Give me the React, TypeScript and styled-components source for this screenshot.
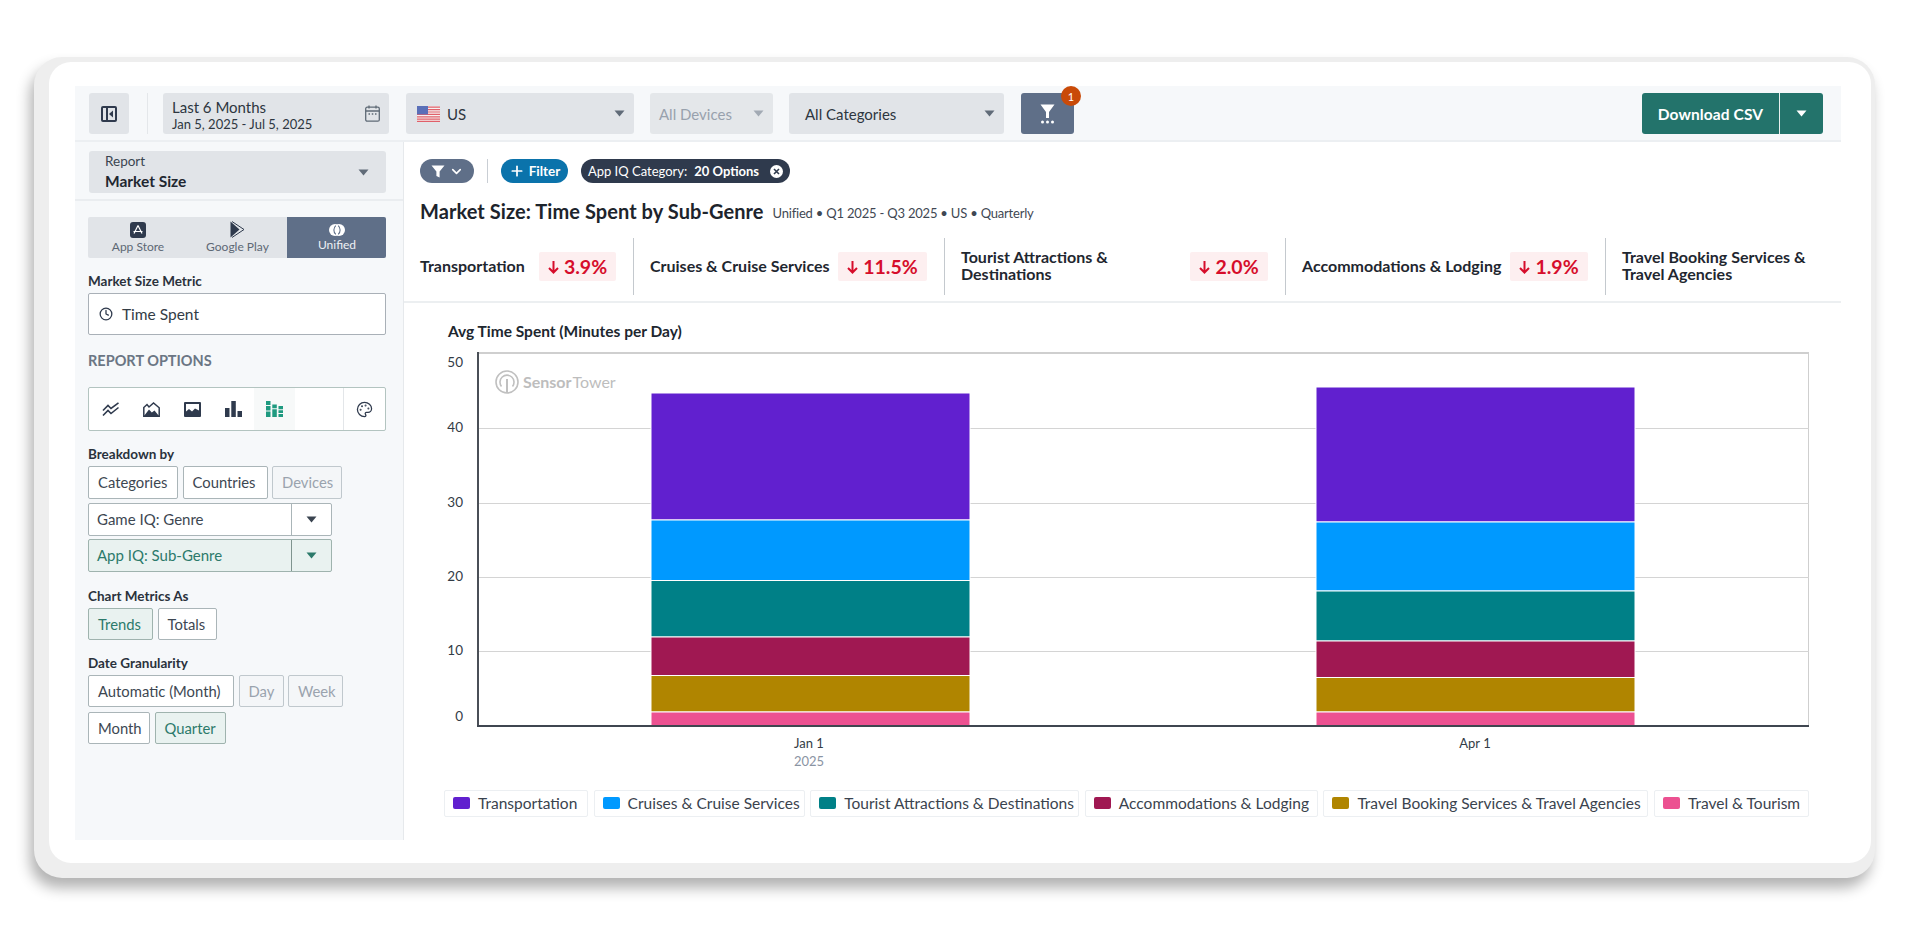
import React from "react";
import styled, { createGlobalStyle } from "styled-components";
import { Clock, Palette, Plus, ChevronDown } from "lucide-react";

const GlobalStyle = createGlobalStyle`
  html, body {
    margin: 0;
    background: #fff;
    font-family: "Lato", "Noto Sans", sans-serif;
    color: #232b35;
  }
  * { box-sizing: border-box; }
`;

const Page = styled.div`
  height: 925px;
  padding: 57px 0 0 34px;
  overflow: hidden;
`;

const Shell = styled.div`
  width: 1841px;
  height: 821px;
  padding: 5px 4px 15px 15px;
  background: #eeeeee;
  border-radius: 28px;
  box-shadow: -4px 10px 14px rgba(0, 0, 0, 0.3);
`;

const Card = styled.div`
  height: 100%;
  padding: 24px 30px 23px 26px;
  background: #fff;
  border-radius: 22px;
  display: flex;
  flex-direction: column;
`;

const Toolbar = styled.div`
  flex: none;
  height: 56px;
  padding: 7px 18px 0 14px;
  display: flex;
  align-items: flex-start;
  background: #f6f8fa;
  border-bottom: 2px solid #eceff2;
`;

const ToolCell = styled.div<{ $w: number; $ml?: number; $muted?: boolean; $pl?: number }>`
  width: ${(p) => p.$w}px;
  height: 41px;
  margin-left: ${(p) => p.$ml ?? 16}px;
  padding: 0 9px 0 ${(p) => p.$pl ?? 9}px;
  display: flex;
  align-items: center;
  justify-content: space-between;
  background: ${(p) => (p.$muted ? "#e4e7ea" : "#e1e4e8")};
  border-radius: 3px;
  font-size: 15px;
  color: ${(p) => (p.$muted ? "#98a1ad" : "#2d3640")};
`;

const CollapseBtn = styled(ToolCell)`
  justify-content: center;
  padding: 0;
`;

const ToolDivider = styled.div`
  width: 1px;
  height: 41px;
  margin-left: 18px;
  margin-right: -1px;
  background: #e4e7ea;
`;

const DateText = styled.div`
  padding-top: 3px;
  display: flex;
  flex-direction: column;
  line-height: 18px;
  font-size: 15px;
  span + span {
    font-size: 13px;
    line-height: 17px;
  }
`;

const FlagRow = styled.div`
  padding-left: 2px;
  display: flex;
  align-items: center;
  gap: 7px;
`;

const FilterBtn = styled.div`
  position: relative;
  width: 53px;
  height: 41px;
  margin-left: 17px;
  display: flex;
  align-items: center;
  justify-content: center;
  background: #5f6f88;
  border-radius: 3px;
`;

const CountBadge = styled.span`
  position: absolute;
  top: -7px;
  right: -7px;
  width: 20px;
  height: 20px;
  border-radius: 50%;
  background: #c94a08;
  color: #fff;
  font-size: 11px;
  display: flex;
  align-items: center;
  justify-content: center;
`;

const Download = styled.div`
  margin-left: auto;
  height: 41px;
  display: flex;
  background: #23736b;
  border-radius: 3px;
  color: #fff;
  font-size: 15.5px;
  font-weight: 700;
  letter-spacing: 0.1px;
`;

const DownloadLabel = styled.div`
  width: 138px;
  display: flex;
  align-items: center;
  justify-content: center;
  border-right: 1px solid #e8f0ee;
`;

const DownloadCaret = styled.div`
  width: 43px;
  display: flex;
  align-items: center;
  justify-content: center;
`;

const Body = styled.div`
  flex: 1;
  display: flex;
  min-height: 0;
`;

const Sidebar = styled.aside`
  flex: none;
  width: 329px;
  background: #f6f8fa;
  border-right: 1px solid #e6e9ec;
`;

const ReportSection = styled.div`
  height: 59px;
  padding: 9px 17px 0 14px;
  border-bottom: 2px solid #eaedf0;
`;

const ReportSelect = styled.div`
  height: 42px;
  padding: 0 17px 0 16px;
  display: flex;
  align-items: center;
  justify-content: space-between;
  background: #e1e4e8;
  border-radius: 3px;
`;

const ReportText = styled.div`
  display: flex;
  flex-direction: column;
  font-size: 13.5px;
  line-height: 19px;
  color: #3a4450;
  strong {
    font-size: 15.5px;
    font-weight: 700;
    line-height: 21px;
    color: #1f2730;
  }
`;

const Controls = styled.div`
  padding: 16px 17px 0 13px;
`;

const Segments = styled.div`
  height: 41px;
  display: grid;
  grid-template-columns: 100px 99px 100px;
  background: #e1e4e8;
  border-radius: 2px;
  overflow: hidden;
`;

const Segment = styled.div<{ $active?: boolean }>`
  display: flex;
  flex-direction: column;
  align-items: center;
  justify-content: center;
  gap: 1px;
  font-size: 12px;
  line-height: 15px;
  background: ${(p) => (p.$active ? "#5f6f88" : "transparent")};
  color: ${(p) => (p.$active ? "#eef1f5" : "#5d6875")};
`;

const FieldLabel = styled.div<{ $mt?: number }>`
  height: 18px;
  margin-top: ${(p) => p.$mt ?? 15}px;
  font-size: 13.5px;
  font-weight: 700;
  line-height: 17px;
  color: #2a323c;
`;

const MetricBox = styled.div`
  height: 42px;
  margin-top: 2px;
  padding: 0 10px;
  display: flex;
  align-items: center;
  gap: 9px;
  background: #fff;
  border: 1px solid #a9b0b7;
  border-radius: 2px;
  font-size: 15.5px;
  color: #333c46;
`;

const SectionHead = styled.div`
  height: 20px;
  margin-top: 16px;
  font-size: 14.5px;
  font-weight: 700;
  line-height: 20px;
  color: #6b7684;
`;

const IconBar = styled.div`
  height: 44px;
  margin-top: 16px;
  padding-left: 1px;
  display: flex;
  background: #fff;
  border: 1px solid #b3c4c0;
  border-radius: 2px;
`;

const IconCell = styled.div<{ $active?: boolean }>`
  width: 41px;
  display: flex;
  align-items: center;
  justify-content: center;
  background: ${(p) => (p.$active ? "#f7f9f9" : "transparent")};
`;

const PaletteCell = styled(IconCell)`
  margin-left: auto;
  width: 42px;
  border-left: 1px solid #e3e6e9;
`;

const ChipRow = styled.div<{ $mt?: number }>`
  display: flex;
  gap: 4.5px;
  margin-top: ${(p) => p.$mt ?? 2}px;
`;

const Chip = styled.div<{ $w: number; $on?: boolean; $off?: boolean; $h?: number }>`
  width: ${(p) => p.$w}px;
  height: ${(p) => p.$h ?? 32}px;
  padding: 0 0 1px 9px;
  display: flex;
  align-items: center;
  font-size: 14.8px;
  white-space: nowrap;
  border: 1px solid ${(p) => (p.$on ? "#9fb3ae" : p.$off ? "#c0c8cd" : "#aab5b8")};
  border-radius: 2px;
  background: ${(p) => (p.$on ? "#e9f2f0" : p.$off ? "#f4f6f8" : "#fff")};
  color: ${(p) => (p.$on ? "#2c7a6b" : p.$off ? "#9aa3ae" : "#3d4752")};
`;

const SplitSelect = styled.div<{ $on?: boolean; $mt: number }>`
  width: 244px;
  height: 33px;
  margin-top: ${(p) => p.$mt}px;
  display: flex;
  font-size: 15px;
  border: 1px solid ${(p) => (p.$on ? "#9fb3ae" : "#aab5b8")};
  border-radius: 2px;
  background: ${(p) => (p.$on ? "#e9f2f0" : "#fff")};
  color: ${(p) => (p.$on ? "#2c7a6b" : "#3d4752")};
`;

const SplitLabel = styled.div`
  flex: 1;
  padding: 0 0 1px 8px;
  display: flex;
  align-items: center;
`;

const SplitCaret = styled.div<{ $on?: boolean }>`
  width: 40px;
  display: flex;
  align-items: center;
  justify-content: center;
  border-left: 1px solid ${(p) => (p.$on ? "#7f948f" : "#aab5b8")};
`;

const Main = styled.main`
  flex: 1;
  min-width: 0;
`;

const FilterRow = styled.div`
  height: 24px;
  margin: 17px 0 0 16px;
  display: flex;
  align-items: center;
`;

const Pill = styled.div<{ $bg: string; $w: number; $ml?: number }>`
  width: ${(p) => p.$w}px;
  height: 24px;
  margin-left: ${(p) => p.$ml ?? 0}px;
  display: flex;
  align-items: center;
  justify-content: center;
  gap: 4px;
  border-radius: 12px;
  background: ${(p) => p.$bg};
  color: #fff;
  font-size: 13px;
  white-space: nowrap;
  b {
    font-weight: 700;
    margin-left: 3px;
  }
`;

const FilterText = styled.span`
  font-weight: 700;
  font-size: 13.5px;
`;

const PillClose = styled.svg`
  margin-left: 7px;
`;

const PillDivider = styled.div`
  width: 1px;
  height: 24px;
  margin: 0 13px;
  background: #c9ced4;
`;

const TitleRow = styled.div`
  height: 26px;
  margin: 15px 0 0 16px;
  display: flex;
  align-items: center;
  gap: 9px;
`;

const Title = styled.h1`
  margin: 0;
  font-size: 20px;
  font-weight: 700;
  line-height: 26px;
  letter-spacing: 0.07px;
  color: #1d242c;
`;

const Subtitle = styled.span`
  padding-top: 3px;
  font-size: 13px;
  letter-spacing: -0.2px;
  color: #3f4853;
`;

const KpiRow = styled.div`
  height: 65px;
  margin-top: 14px;
  display: flex;
  border-bottom: 2px solid #eceff1;
`;

const Kpi = styled.div<{ $w: number; $first?: boolean }>`
  width: ${(p) => p.$w}px;
  height: 57px;
  padding: 0 17px 3px 16px;
  display: flex;
  align-items: center;
  justify-content: space-between;
  border-left: ${(p) => (p.$first ? "none" : "1px solid #c4c9ce")};
  font-size: 16px;
  font-weight: 700;
  line-height: 17px;
  color: #1f2730;
`;

const Delta = styled.div<{ $w: number }>`
  flex: none;
  width: ${(p) => p.$w}px;
  height: 29px;
  margin-top: 3px;
  display: flex;
  align-items: center;
  justify-content: center;
  gap: 5px;
  background: #fdeff0;
  border-radius: 2px;
  color: #d60d2b;
  font-size: 19.5px;
  font-weight: 700;
`;

const ChartTitle = styled.div`
  height: 20px;
  margin: 18px 0 1px 44px;
  font-size: 15.5px;
  font-weight: 700;
  line-height: 20px;
  color: #20272f;
`;

const ChartSvg = styled.svg`
  display: block;
  width: 1437px;
  height: 448px;
`;

const Legend = styled.div`
  margin-left: 40px;
  display: flex;
  gap: 5.6px;
`;

const LegendChip = styled.div<{ $w: number }>`
  width: ${(p) => p.$w}px;
  height: 27px;
  padding: 0 0 1px 8px;
  display: flex;
  align-items: center;
  gap: 8px;
  border: 1px solid #eceff2;
  border-radius: 2px;
  font-size: 15.5px;
  color: #3a434e;
  white-space: nowrap;
`;

const Swatch = styled.i<{ $c: string }>`
  width: 17px;
  height: 12px;
  border-radius: 2px;
  background: ${(p) => p.$c};
`;

const Caret = ({ c = "#606b78" }: { c?: string }) => (
  <svg width="11" height="7" viewBox="0 0 11 7">
    <path d="M0.5 0.5h10L5.5 6.5z" fill={c} />
  </svg>
);

const DownArrow = () => (
  <svg width="11" height="14" viewBox="0 0 11 14">
    <path d="M5.5 1v11M1 8l4.5 4.500L10 8" fill="none" stroke="#d60d2b" strokeWidth="2" />
  </svg>
);

const Funnel = ({ w = 14, h = 13 }: { w?: number; h?: number }) => (
  <svg width={w} height={h} viewBox="0 0 14 13">
    <path d="M0.5 0.5h13L8.6 6.5V12.5L5.4 11V6.5z" fill="#fff" />
  </svg>
);

const series = [
  { name: "Transportation", color: "#6120cf", w: 144 },
  { name: "Cruises & Cruise Services", color: "#0099ff", w: 211 },
  { name: "Tourist Attractions & Destinations", color: "#008087", w: 269 },
  { name: "Accommodations & Lodging", color: "#a01852", w: 233 },
  { name: "Travel Booking Services & Travel Agencies", color: "#b08500", w: 325 },
  { name: "Travel & Tourism", color: "#ec5191", w: 155.5 },
];

const bars = [
  { x: 651, w: 319, tops: [393, 520, 580.5, 637, 675.5, 712] },
  { x: 1316, w: 319, tops: [387, 522, 591, 641, 677.5, 712] },
];

const gridY = [428.5, 503.5, 577.5, 651.5];

const axisLabels = [
  { y: 363, t: "50" },
  { y: 428, t: "40" },
  { y: 503, t: "30" },
  { y: 577, t: "20" },
  { y: 651, t: "10" },
  { y: 717, t: "0" },
];

const Chart = () => (
  <ChartSvg viewBox="404 342 1437 448">
    <line x1="478" x2="1809" y1="353" y2="353" stroke="#cfcfcf" strokeWidth="2" />
    <line x1="1808.5" x2="1808.5" y1="353" y2="726" stroke="#cfcfcf" />
    {gridY.map((y) => (
      <line key={y} x1="478" x2="1809" y1={y} y2={y} stroke="#d4d4d4" />
    ))}
    {bars.map((b) =>
      b.tops.map((top, i) => (
        <rect
          key={b.x + "-" + i}
          x={b.x}
          y={top}
          width={b.w}
          height={(b.tops[i + 1] ?? 726) - top}
          fill={series[i].color}
          stroke="#fff"
          strokeWidth="1"
        />
      ))
    )}
    <line x1="478" x2="478" y1="352" y2="727" stroke="#4a4f57" strokeWidth="2" />
    <line x1="477" x2="1809" y1="726" y2="726" stroke="#3f4650" strokeWidth="2" />
    {axisLabels.map((l) => (
      <text key={l.t} x="463" y={l.y + 4} textAnchor="end" fontSize="13.5" fill="#333c46">
        {l.t}
      </text>
    ))}
    <text x="809" y="748" textAnchor="middle" fontSize="13" fill="#333c46">Jan 1</text>
    <text x="809" y="766" textAnchor="middle" fontSize="13" fill="#8a94a3">2025</text>
    <text x="1475" y="748" textAnchor="middle" fontSize="13" fill="#333c46">Apr 1</text>
    <g fill="none" stroke="#c0c0c0" strokeWidth="1.6">
      <circle cx="507" cy="382" r="11" />
      <path d="M501.500 386.500a7 7 0 1 1 11 0" />
      <path d="M507 379v14" strokeWidth="2" />
    </g>
    <text x="523" y="388" fontSize="16" fontWeight="700" fill="#bdbdbd">
      Sensor<tspan fontWeight="400" dx="1">Tower</tspan>
    </text>
  </ChartSvg>
);

export default function App() {
  return (
    <>
      <GlobalStyle />
      <Page>
        <Shell>
          <Card>
            <Toolbar>
              <CollapseBtn $w={40} $ml={0}>
                <svg width="16" height="16" viewBox="0 0 16 16">
                  <rect x="1" y="1" width="14" height="14" rx="1" fill="none" stroke="#2f3a4d" strokeWidth="2" />
                  <path d="M6 1v14" stroke="#2f3a4d" strokeWidth="2" />
                  <path d="M12 4.5v7L8 8z" fill="#2f3a4d" />
                </svg>
              </CollapseBtn>
              <ToolDivider />
              <ToolCell $w={226}>
                <DateText>
                  <span>Last 6 Months</span>
                  <span>Jan 5, 2025 - Jul 5, 2025</span>
                </DateText>
                <svg width="15" height="17" viewBox="0 0 15 17">
                  <g fill="none" stroke="#5f6a76" strokeWidth="1.3">
                    <rect x="0.7" y="2.2" width="13.6" height="14" rx="1.5" />
                    <path d="M0.7 6h13.6M4 0.5v3M11 0.5v3" />
                    <path d="M3.5 9h1.5M6.8 9h1.5M10 9h1.5" />
                  </g>
                </svg>
              </ToolCell>
              <ToolCell $w={228} $ml={17}>
                <FlagRow>
                  <svg width="23" height="16" viewBox="0 0 23 16">
                    <rect width="23" height="16" fill="#f6f1f1" />
                    <path d="M0 1.2h23M0 3.6h23M0 6h23M0 8.4h23M0 10.8h23M0 13.2h23M0 15.4h23" stroke="#e0606a" strokeWidth="1.2" />
                    <rect width="11" height="8.4" fill="#5a6fb8" />
                  </svg>
                  US
                </FlagRow>
                <Caret />
              </ToolCell>
              <ToolCell $w={123} $muted>
                All Devices
                <Caret c="#a2aab4" />
              </ToolCell>
              <ToolCell $w={215} $pl={16}>
                <span>All Categories</span>
                <Caret />
              </ToolCell>
              <FilterBtn>
                <svg width="15" height="20" viewBox="0 0 15 20">
                  <path d="M0.5 0.5h14L9 8v6H6V8z" fill="#fff" />
                  <circle cx="2.5" cy="18" r="1.5" fill="#fff" />
                  <circle cx="7.5" cy="18" r="1.5" fill="#fff" />
                  <circle cx="12.5" cy="18" r="1.5" fill="#fff" />
                </svg>
                <CountBadge>1</CountBadge>
              </FilterBtn>
              <Download>
                <DownloadLabel>Download CSV</DownloadLabel>
                <DownloadCaret>
                  <Caret c="#fff" />
                </DownloadCaret>
              </Download>
            </Toolbar>
            <Body>
              <Sidebar>
                <ReportSection>
                  <ReportSelect>
                    <ReportText>
                      Report
                      <strong>Market Size</strong>
                    </ReportText>
                    <Caret />
                  </ReportSelect>
                </ReportSection>
                <Controls>
                  <Segments>
                    <Segment>
                      <svg width="16" height="16" viewBox="0 0 16 16">
                        <rect width="16" height="16" rx="3" fill="#2f3a4d" />
                        <path d="M8 3.5 4 11.5M8 3.5l4 8M3.5 9.5h9" stroke="#fff" strokeWidth="1.2" fill="none" />
                      </svg>
                      App Store
                    </Segment>
                    <Segment>
                      <svg width="15" height="17" viewBox="0 0 15 17">
                        <path d="M0.5 0.5 9.5 8.5 0.5 16.5z" fill="#2f3a4d" />
                        <path d="M2 0.5l12 8-12 8" fill="none" stroke="#2f3a4d" strokeWidth="1" />
                      </svg>
                      Google Play
                    </Segment>
                    <Segment $active>
                      <svg width="16" height="12" viewBox="0 0 16 12">
                        <circle cx="6" cy="6" r="6" fill="#fff" />
                        <circle cx="10" cy="6" r="6" fill="#fff" />
                        <path d="M6.800 1.600a6 6 0 0 0 0 8.800M9.200 1.600a6 6 0 0 1 0 8.800" fill="none" stroke="#5f6f88" strokeWidth="1.1" />
                      </svg>
                      Unified
                    </Segment>
                  </Segments>
                  <FieldLabel>Market Size Metric</FieldLabel>
                  <MetricBox>
                    <Clock size={14} strokeWidth={2.2} color="#2f3a4d" />
                    Time Spent
                  </MetricBox>
                  <SectionHead>REPORT OPTIONS</SectionHead>
                  <IconBar>
                    <IconCell>
                      <svg width="18" height="15" viewBox="0 0 18 15">
                        <path d="M1 8.5 6 3.5l3 3L16.5 0.8M1 13.5l5-5 3 3 7.500-6" fill="none" stroke="#2f3a4d" strokeWidth="1.6" />
                      </svg>
                    </IconCell>
                    <IconCell>
                      <svg width="17" height="15" viewBox="0 0 17 15">
                        <path d="M0.8 14.200V5.500L4 2.500l2 2.500 4.500-4 5.700 4.800v8.400z" fill="none" stroke="#2f3a4d" strokeWidth="1.5" />
                        <path d="M0.800 14.200 6 7.500l2.800 3 2.700-2 4.700 5.700z" fill="#2f3a4d" />
                      </svg>
                    </IconCell>
                    <IconCell>
                      <svg width="17" height="15" viewBox="0 0 17 15">
                        <rect width="17" height="15" rx="1" fill="#2f3a4d" />
                        <path d="M2 2h13v6.500L11 6.500 8 9.500 5 7 2 9.500z" fill="#fff" />
                      </svg>
                    </IconCell>
                    <IconCell>
                      <svg width="17" height="16" viewBox="0 0 17 16">
                        <path d="M0 7h4.500v9H0zM6.300 0h4.500v16H6.300zM12.500 10H17v6h-4.500z" fill="#2f3a4d" />
                      </svg>
                    </IconCell>
                    <IconCell $active>
                      <svg width="17" height="16" viewBox="0 0 17 16">
                        <path d="M0 0h4.500v4H0zM0 5h4.500v4.500H0zM0 10.500h4.500V16H0zM6.300 3.500h4.500v3.800H6.300zM6.300 8.300h4.500V16H6.300zM12.500 5H17v3.200h-4.500zM12.500 9.200H17V12h-4.500zM12.500 13H17v3h-4.500z" fill="#1f9a80" />
                      </svg>
                    </IconCell>
                    <PaletteCell>
                      <Palette size={17} strokeWidth={1.8} color="#2f3a4d" />
                    </PaletteCell>
                  </IconBar>
                  <FieldLabel>Breakdown by</FieldLabel>
                  <ChipRow>
                    <Chip $w={90} $h={33}>Categories</Chip>
                    <Chip $w={85} $h={33}>Countries</Chip>
                    <Chip $w={70} $h={33} $off>Devices</Chip>
                  </ChipRow>
                  <SplitSelect $mt={4}>
                    <SplitLabel>Game IQ: Genre</SplitLabel>
                    <SplitCaret>
                      <Caret c="#3a4450" />
                    </SplitCaret>
                  </SplitSelect>
                  <SplitSelect $mt={3} $on>
                    <SplitLabel>App IQ: Sub-Genre</SplitLabel>
                    <SplitCaret $on>
                      <Caret c="#2c7a6b" />
                    </SplitCaret>
                  </SplitSelect>
                  <FieldLabel $mt={16}>Chart Metrics As</FieldLabel>
                  <ChipRow>
                    <Chip $w={65} $on>Trends</Chip>
                    <Chip $w={59}>Totals</Chip>
                  </ChipRow>
                  <FieldLabel>Date Granularity</FieldLabel>
                  <ChipRow>
                    <Chip $w={146}>Automatic (Month)</Chip>
                    <Chip $w={45} $off>Day</Chip>
                    <Chip $w={55} $off>Week</Chip>
                  </ChipRow>
                  <ChipRow $mt={5}>
                    <Chip $w={62}>Month</Chip>
                    <Chip $w={71} $on>Quarter</Chip>
                  </ChipRow>
                </Controls>
              </Sidebar>
              <Main>
                <FilterRow>
                  <Pill $bg="#5f6f88" $w={54}>
                    <Funnel />
                    <ChevronDown size={15} strokeWidth={2.6} color="#fff" />
                  </Pill>
                  <PillDivider />
                  <Pill $bg="#0b73ab" $w={67}>
                    <Plus size={16} strokeWidth={2.6} color="#fff" />
                    <FilterText>Filter</FilterText>
                  </Pill>
                  <Pill $bg="#2f3a4d" $w={209} $ml={13}>
                    App IQ Category:<b>20 Options</b>
                    <PillClose width="13" height="13" viewBox="0 0 13 13">
                      <circle cx="6.500" cy="6.500" r="6.500" fill="#fff" />
                      <path d="M4 4l5 5M9 4l-5 5" stroke="#2f3a4d" strokeWidth="1.6" />
                    </PillClose>
                  </Pill>
                </FilterRow>
                <TitleRow>
                  <Title>Market Size: Time Spent by Sub-Genre</Title>
                  <Subtitle>Unified • Q1 2025 - Q3 2025 • US • Quarterly</Subtitle>
                </TitleRow>
                <KpiRow>
                  <Kpi $w={229} $first>
                    Transportation
                    <Delta $w={77}><DownArrow />3.9%</Delta>
                  </Kpi>
                  <Kpi $w={311}>
                    Cruises &amp; Cruise Services
                    <Delta $w={89}><DownArrow />11.5%</Delta>
                  </Kpi>
                  <Kpi $w={341}>
                    <span>Tourist Attractions &amp;<br />Destinations</span>
                    <Delta $w={78}><DownArrow />2.0%</Delta>
                  </Kpi>
                  <Kpi $w={320}>
                    Accommodations &amp; Lodging
                    <Delta $w={78}><DownArrow />1.9%</Delta>
                  </Kpi>
                  <Kpi $w={236}>
                    <span>Travel Booking Services &amp;<br />Travel Agencies</span>
                  </Kpi>
                </KpiRow>
                <ChartTitle>Avg Time Spent (Minutes per Day)</ChartTitle>
                <Chart />
                <Legend>
                  {series.map((s) => (
                    <LegendChip key={s.name} $w={s.w}>
                      <Swatch $c={s.color} />
                      {s.name}
                    </LegendChip>
                  ))}
                </Legend>
              </Main>
            </Body>
          </Card>
        </Shell>
      </Page>
    </>
  );
}
